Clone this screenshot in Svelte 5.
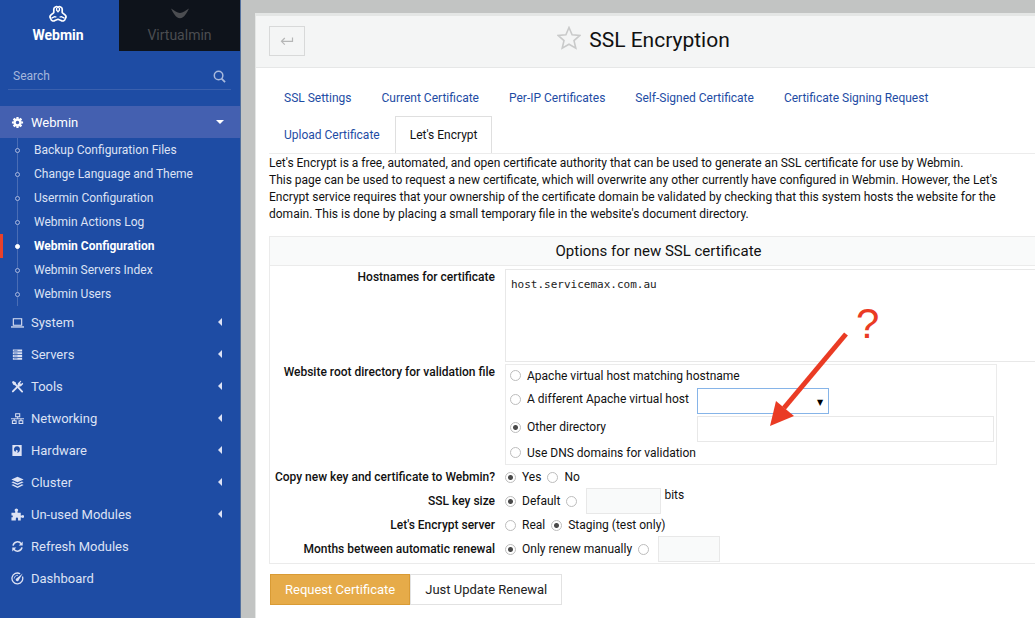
<script lang="ts">
    let search = $state("");
    let rootDir = $state("other");
    let copyKey = $state("yes");
    let keySize = $state("default");
    let server = $state("staging");
    let renewal = $state("manual");

    const subItems = [
        "Backup Configuration Files",
        "Change Language and Theme",
        "Usermin Configuration",
        "Webmin Actions Log",
        "Webmin Configuration",
        "Webmin Servers Index",
        "Webmin Users",
    ];

    const categories = [
        { icon: "system", name: "System", sub: true },
        { icon: "servers", name: "Servers", sub: true },
        { icon: "tools", name: "Tools", sub: true },
        { icon: "network", name: "Networking", sub: true },
        { icon: "hardware", name: "Hardware", sub: true },
        { icon: "cluster", name: "Cluster", sub: true },
        { icon: "puzzle", name: "Un-used Modules", sub: true },
        { icon: "refresh", name: "Refresh Modules", sub: false },
        { icon: "dashboard", name: "Dashboard", sub: false },
    ];

    const tabs = [
        "SSL Settings",
        "Current Certificate",
        "Per-IP Certificates",
        "Self-Signed Certificate",
        "Certificate Signing Request",
        "Upload Certificate",
        "Let's Encrypt",
    ];
</script>

{#snippet icon(name)}
    <svg class="icon" viewBox="0 0 14 14" aria-hidden="true">
        {#if name === "cog"}
            <circle cx="7" cy="7" r="3.2" fill="none" stroke="currentColor" stroke-width="2.6" />
            <path d="M7 1v2M7 11v2M1 7h2M11 7h2M2.8 2.8l1.4 1.4M9.8 9.8l1.4 1.4M2.8 11.2l1.4-1.4M9.8 4.2l1.4-1.4" stroke="currentColor" stroke-width="2.4" />
        {:else if name === "system"}
            <path d="M2.500 10V3h9v7z" fill="none" stroke="currentColor" stroke-width="1.200" />
            <path d="M0 11.800h14" stroke="currentColor" stroke-width="1.400" />
        {:else if name === "servers"}
            <path d="M2 1.5h10v2.2H2zM2 4.5h10v2.2H2zM2 7.5h10v2.2H2zM2 10.5h10v2.2H2z" fill="currentColor" />
            <path d="M3 2.6h4M3 5.6h4M3 8.6h4M3 11.6h4" stroke="#1e4ca4" stroke-width=".6" />
        {:else if name === "tools"}
            <path d="M4 4l8 8.5" stroke="currentColor" stroke-width="2" stroke-linecap="round" />
            <path d="M2 12.3l6-6" stroke="currentColor" stroke-width="2" stroke-linecap="round" />
            <path d="M8 7.2L7 6l.4-2.6L10.2.9l1 .3-1.4 2 .9 1 2-1.2.4 1.2-2.3 2.5zM1 2.2L2.4 1l2.9 1.8.2 1.9-1.3 1-1.7-.5z" fill="currentColor" />
        {:else if name === "network"}
            <path d="M5 2h4.4v3H5zM1.5 9.5h4v3h-4zM8.7 9.5h4v3h-4z" fill="none" stroke="currentColor" stroke-width="1.1" />
            <path d="M0 7.3h14M7.2 5v2.3M3.5 7.3v2.2M10.7 7.3v2.2" stroke="currentColor" stroke-width="1" />
        {:else if name === "hardware"}
            <path fill-rule="evenodd" d="M1.5 1h10v12h-10zM6.5 2.4a3.3 3.3 0 0 0-1.8 6.1l1-2.2 1.6 1.1-1.5 1.8a3.3 3.3 0 1 0 .7-6.8z" fill="currentColor" />
            <path d="M5 11l2-3.6" stroke="currentColor" stroke-width="1" />
        {:else if name === "cluster"}
            <path d="M7 .8l6.6 3L7 6.8.4 3.8zM.4 6.6l1.9-.8L7 8l4.7-2.2 1.9.8L7 9.7zM.4 9.8l1.9-.8L7 11.2 11.7 9l1.9.8L7 13z" fill="currentColor" />
        {:else if name === "puzzle"}
            <path d="M.5 5h4V3.6a1.8 1.8 0 1 1 2.6 0V5h3.4v3h1.2a1.5 1.5 0 1 1 0 2.2h-1.2v3.2H7.6v-2a1.2 1.2 0 0 0-2.4 0v2H.5V10h1.4V8H.5z" fill="currentColor" />
        {:else if name === "refresh"}
            <path d="M2.2 6A4.8 4.8 0 0 1 11 4.2M11.8 8A4.8 4.8 0 0 1 3 9.8" fill="none" stroke="currentColor" stroke-width="1.7" />
            <path d="M12.6 1.6v4.3H8.3zM1.4 12.4V8.1h4.3z" fill="currentColor" />
        {:else if name === "dashboard"}
            <path d="M12.3 4.9A5.8 5.8 0 1 1 9.8 1.9" fill="none" stroke="currentColor" stroke-width="1.4" />
            <path d="M12.6 1.6L8.4 8.6a1.7 1.7 0 1 1-2.2-2z" fill="currentColor" />
            <path d="M3.5 7A3.5 3.5 0 0 1 7.5 3.6" fill="none" stroke="currentColor" stroke-width=".9" />
        {/if}
    </svg>
{/snippet}

<div class="page">
    <aside class="sidebar">
        <div class="switcher">
            <a class="product current" href="#webmin">
                <svg class="logo" viewBox="0 0 18 18" aria-hidden="true">
                    <path d="M4.8 7.600V4a2.600 2.600 0 0 1 4.200-1.700A2.600 2.600 0 0 1 13.200 4v3.600l2.800 2.200a2.700 2.700 0 0 1 .3 3.700 2.700 2.700 0 0 1-4.200 2L9 14.300l-3.100 1.200a2.700 2.700 0 0 1-4.200-2 2.700 2.700 0 0 1 .3-3.700z" fill="none" stroke="currentColor" stroke-width="1.700" stroke-linejoin="round" />
                    <path d="M7.600 3v2.300L9 6.800l1.400-1.500V3M2.600 13.200l3-1.500 1.800.5M15.400 13.200l-3-1.500-1.800.5" fill="none" stroke="currentColor" stroke-width="1.300" />
                </svg>
                <span>Webmin</span>
            </a>
            <a class="product" href="#virtualmin">
                <svg class="logo" viewBox="0 0 20 18" aria-hidden="true">
                    <path d="M1 3.500c3.500 1.800 6 4.500 9 4.500s5.500-2.700 9-4.500c-2 4-4.800 9.700-9 9.700S3 7.500 1 3.500z" fill="currentColor" />
                </svg>
                <span>Virtualmin</span>
            </a>
        </div>

        <div class="search">
            <input type="text" aria-label="Search" placeholder="Search" bind:value={search}>
            <svg viewBox="0 0 14 14" aria-hidden="true">
                <circle cx="6" cy="6" r="4.6" fill="none" stroke="currentColor" stroke-width="1.6" />
                <path d="M9.2 9.2l3.8 3.8" stroke="currentColor" stroke-width="1.9" />
            </svg>
        </div>

        <nav>
            <a class="category open" href="#webmin-category">
                {@render icon("cog")}
                <span>Webmin</span>
                <i class="caret down"></i>
            </a>
            <ul class="sub">
                {#each subItems as item}
                    <li class:active={item === "Webmin Configuration"}>
                        <a href="#module">{item}</a>
                    </li>
                {/each}
            </ul>
            {#each categories as category}
                <a class="category" href="#category">
                    {@render icon(category.icon)}
                    <span>{category.name}</span>
                    {#if category.sub}
                        <i class="caret"></i>
                    {/if}
                </a>
            {/each}
        </nav>
    </aside>

    <main>
        <div class="panel">
            <header>
                <button class="back" type="button" aria-label="Back">
                    <svg viewBox="0 0 14 10" aria-hidden="true">
                        <path d="M12.5 1.5v3.8H1.5M4.8 2L1.5 5.3l3.3 3.3" fill="none" stroke="currentColor" stroke-width="1.2" />
                    </svg>
                </button>
                <h1>
                    <svg viewBox="0 0 24 24" aria-hidden="true">
                        <path d="M12 1.5l3.1 7.2 7.8.7-5.9 5.2 1.8 7.6-6.800-4-6.800 4 1.8-7.600-5.900-5.200 7.800-.7z" fill="none" stroke="currentColor" stroke-width="1.6" />
                    </svg>
                    SSL Encryption
                </h1>
            </header>

            <div class="body">
                <div class="tabs">
                    {#each tabs as tab}
                        <a class:selected={tab === "Let's Encrypt"} href="#tab">{tab}</a>
                    {/each}
                </div>

                <p>
                    Let's Encrypt is a free, automated, and open certificate authority that can be used to generate an SSL certificate for use by Webmin.<br>
                    This page can be used to request a new certificate, which will overwrite any other currently have configured in Webmin. However, the Let's Encrypt service requires that your ownership of the certificate domain be validated by checking that this system hosts the website for the domain. This is done by placing a small temporary file in the website's document directory.
                </p>

                <form>
                    <section class="options">
                        <h2>Options for new SSL certificate</h2>

                        <div class="row tall">
                            <label class="name" for="hostnames">Hostnames for certificate</label>
                            <textarea id="hostnames" spellcheck="false">host.servicemax.com.au</textarea>
                        </div>

                        <div class="row tall">
                            <span class="name" id="root-name">Website root directory for validation file</span>
                            <div class="choices" role="radiogroup" aria-labelledby="root-name">
                                <div class="choice">
                                    <label><input type="radio" value="match" bind:group={rootDir}>Apache virtual host matching hostname</label>
                                </div>
                                <div class="choice field">
                                    <label><input type="radio" value="vhost" bind:group={rootDir}>A different Apache virtual host</label>
                                    <select aria-label="Apache virtual host">
                                        <option></option>
                                    </select>
                                </div>
                                <div class="choice field">
                                    <label><input type="radio" value="other" bind:group={rootDir}>Other directory</label>
                                    <input type="text" class="dir" aria-label="Other directory path">
                                </div>
                                <div class="choice">
                                    <label><input type="radio" value="dns" bind:group={rootDir}>Use DNS domains for validation</label>
                                </div>
                            </div>

                            <div class="note">
                                <svg viewBox="0 0 82 96" aria-hidden="true">
                                    <path d="M76 2L14 76" stroke="#ea3b24" stroke-width="5" />
                                    <path d="M0 94l6-25 18 15z" fill="#ea3b24" />
                                </svg>
                                <span>?</span>
                            </div>
                        </div>

                        <div class="row">
                            <span class="name">Copy new key and certificate to Webmin?</span>
                            <div class="inline">
                                <label><input type="radio" value="yes" bind:group={copyKey}>Yes</label>
                                <label><input type="radio" value="no" bind:group={copyKey}>No</label>
                            </div>
                        </div>
                        <div class="row">
                            <span class="name">SSL key size</span>
                            <div class="inline">
                                <label><input type="radio" value="default" bind:group={keySize}>Default</label>
                                <input type="radio" value="custom" aria-label="Custom key size" bind:group={keySize}>
                                <div class="size">
                                    <input type="text" class="bits" id="bits" disabled>
                                    <label for="bits">bits</label>
                                </div>
                            </div>
                        </div>
                        <div class="row">
                            <span class="name">Let's Encrypt server</span>
                            <div class="inline">
                                <label><input type="radio" value="real" bind:group={server}>Real</label>
                                <label><input type="radio" value="staging" bind:group={server}>Staging (test only)</label>
                            </div>
                        </div>
                        <div class="row">
                            <span class="name">Months between automatic renewal</span>
                            <div class="inline">
                                <label><input type="radio" value="manual" bind:group={renewal}>Only renew manually</label>
                                <input type="radio" value="months" aria-label="Renew after months" bind:group={renewal}>
                                <input type="text" class="months" aria-label="Months" disabled>
                            </div>
                        </div>
                    </section>

                    <div class="buttons">
                        <button class="primary" type="button">Request Certificate</button>
                        <button type="button">Just Update Renewal</button>
                    </div>
                </form>
            </div>
        </div>
    </main>
</div>

<style>
    :global(body){
        background-color: #c2c4c3;
        font-family: Roboto, "Liberation Sans", sans-serif;
        font-size: 12px;
        color: #111;
    }

    *, *::before{
        box-sizing: border-box;
    }

    a{
        text-decoration: none;
    }

    input, textarea, select, button{
        margin: 0;
        font-family: inherit;
        font-size: inherit;
        border-radius: 0;
        outline: none;
    }

    .page{
        display: grid;
        grid-template-columns: 241px 1fr;
        height: 100vh;
        overflow: hidden;
    }

    .sidebar{
        background-color: #1e4ca4;
        border-right: 1px solid #54719f;
        color: #dde2f4;
    }

    .switcher{
        display: grid;
        grid-template-columns: 119px 1fr;
        height: 51px;
    }

    .product{
        display: flex;
        flex-direction: column;
        align-items: center;
        padding-top: 5px;
        background-color: #0e131b;
        color: #4b4d51;
        font-size: 14px;
        line-height: 25px;
    }

    .product.current{
        padding-right: 3px;
        background-color: transparent;
        color: #fff;
        font-weight: 700;
    }

    .logo{
        flex: none;
        width: 20px;
        height: 18px;
    }

    .search{
        display: flex;
        align-items: center;
        height: 27px;
        margin: 12px 9px 16px 8px;
        padding: 0 5px;
        border-bottom: 1px solid #3a60ae;
    }

    .search input{
        flex: 1;
        min-width: 0;
        padding: 0;
        border: none;
        background: none;
        color: #fff;
    }

    .search input::placeholder{
        color: #a5b7dc;
        opacity: 1;
    }

    .search svg{
        width: 13px;
        height: 13px;
        color: #a9badd;
    }

    .category{
        display: flex;
        align-items: center;
        gap: 7px;
        height: 32px;
        padding: 0 18px 0 11px;
        color: #dde2f4;
        font-size: 13px;
    }

    .category span{
        flex: 1;
    }

    .category.open{
        padding-right: 16px;
        background-color: #4460b0;
        color: #fff;
    }

    .icon{
        width: 13px;
        height: 13px;
    }

    .caret{
        border: 4px solid transparent;
        border-right-color: currentColor;
        border-left-width: 0;
    }

    .caret.down{
        border: 4px solid transparent;
        border-top-color: currentColor;
        border-bottom-width: 0;
    }

    .sub{
        margin: 0;
        padding: 0;
        list-style: none;
        background: linear-gradient(#4a6db5, #4a6db5) 17px 0 / 1px 100% no-repeat;
    }

    .sub li{
        display: flex;
        align-items: center;
        gap: 14px;
        height: 24px;
        padding-left: 12px;
        border-left: 3px solid transparent;
    }

    .sub li::before{
        content: "";
        width: 5px;
        height: 5px;
        border: 1px solid #a9b7dd;
        border-radius: 50%;
        background-color: #1e4ca4;
    }

    .sub a{
        color: #dde2f4;
    }

    .sub .active{
        border-left-color: #e8412b;
    }

    .sub .active::before{
        border-color: #fff;
        background-color: #fff;
    }

    .sub .active a{
        color: #fff;
        font-weight: 700;
    }

    main{
        min-width: 0;
        padding: 13px 0 0 14px;
    }

    .panel{
        height: 100%;
        margin-right: -1px;
        border: 1px solid #e4e6e5;
        border-top-width: 3px;
        border-bottom: none;
        background-color: #fff;
    }

    header{
        position: relative;
        display: flex;
        align-items: center;
        justify-content: center;
        height: 52px;
        padding: 0 4px 4px 0;
        border-bottom: 1px solid #e6e7e7;
        background-color: #f4f5f5;
    }

    .back{
        position: absolute;
        left: 13px;
        top: 10px;
        display: flex;
        align-items: center;
        justify-content: center;
        width: 36px;
        height: 30px;
        border: 1px solid #d8d9d9;
        background: none;
        color: #b5b6b6;
    }

    .back svg{
        flex: none;
        width: 14px;
    }

    h1{
        display: flex;
        align-items: center;
        gap: 8px;
        margin: 0;
        font-size: 21px;
        font-weight: 400;
    }

    h1 svg{
        width: 24px;
        height: 24px;
        margin-bottom: 3px;
        color: #c9caca;
    }

    .body{
        padding: 11px 0 0 13px;
    }

    .tabs{
        display: flex;
        flex-wrap: wrap;
        margin-bottom: 1px;
        border-bottom: 1px solid #ececec;
    }

    .tabs a{
        height: 37px;
        padding: 0 14px;
        border: 1px solid transparent;
        border-bottom: none;
        color: #1e4ca4;
        line-height: 36px;
    }

    .tabs .selected{
        margin-bottom: -1px;
        border-color: #dfdfdf;
        background-color: #fff;
        color: #111;
    }

    p{
        margin: 0;
        line-height: 17px;
    }

    .options{
        margin: 13px -13px 0 0;
        padding-bottom: 2px;
        border: 1px solid #ebebeb;
    }

    h2{
        margin: 0 0 1px;
        border-bottom: 1px solid #ebebeb;
        background-color: #f9fafa;
        font-size: 15px;
        font-weight: 400;
        line-height: 28px;
        text-align: center;
    }

    .row{
        position: relative;
        display: grid;
        grid-template-columns: 225px 1fr;
        grid-template-rows: 24px;
        gap: 10px;
        align-items: center;
    }

    .row.tall{
        grid-template-rows: auto;
        align-items: start;
        padding-top: 2px;
    }

    textarea{
        display: block;
        width: 100%;
        height: 93px;
        padding: 8px 5px;
        border: 1px solid #e8e8e8;
        color: #222;
        font-family: "DejaVu Sans Mono", monospace;
        font-size: 11px;
        resize: none;
    }

    .choices{
        margin-right: 50px;
        padding: 0 2px 1px 4px;
        border: 1px solid #ebebeb;
    }

    .choice{
        display: flex;
        align-items: center;
        height: 21px;
    }

    .choice.field{
        position: relative;
        display: grid;
        grid-template-columns: 187px 1fr;
        align-items: end;
        height: 28px;
    }

    .choice.field label{
        align-self: start;
        height: 26px;
    }

    label{
        display: flex;
        align-items: center;
        gap: 6px;
        white-space: nowrap;
    }

    .name{
        display: block;
        font-weight: 500;
        line-height: 16px;
        text-align: right;
    }

    input[type="radio"]{
        appearance: none;
        flex: none;
        width: 11px;
        height: 11px;
        border: 1px solid #bdbdbd;
        border-radius: 50%;
        background-color: #fff;
    }

    input[type="radio"]:checked{
        background: radial-gradient(circle, #4a4a4a 2px, #fff 3px);
    }

    input[type="text"], select{
        height: 26px;
    }

    .search input[type="text"]{
        height: 20px;
    }

    select{
        appearance: none;
        width: 132px;
        border: 1px solid #86b4e8;
        background-color: #fff;
    }

    .field:has(select)::after{
        content: "▼";
        position: absolute;
        left: 307px;
        bottom: 7px;
        font-family: "DejaVu Sans", sans-serif;
        font-size: 8px;
        color: #000;
        pointer-events: none;
    }

    .dir, .bits, .months{
        border: 1px solid #e8e8e8;
        background-color: #fff;
    }

    .inline{
        display: flex;
        align-items: center;
        gap: 6px;
    }

    .size{
        display: flex;
        align-items: flex-start;
        gap: 3px;
    }

    .bits{
        width: 75px;
        margin-left: 3px;
        background-color: #f9fafa;
    }

    .months{
        width: 62px;
        margin-left: 3px;
        background-color: #f9fafa;
    }

    .note{
        position: absolute;
        left: 500px;
        top: -30px;
        width: 82px;
        color: #ea3b24;
        pointer-events: none;
    }

    .note svg{
        display: block;
        width: 82px;
    }

    .note span{
        position: absolute;
        left: 86px;
        top: -32px;
        font-family: "Liberation Sans", sans-serif;
        font-size: 42px;
        line-height: 48px;
    }

    .buttons{
        display: flex;
        margin: 10px 0 0 1px;
    }

    .buttons button{
        height: 31px;
        padding: 0 14px;
        border: 1px solid #e2e2e2;
        background-color: #fff;
        color: #222;
        font-size: 13px;
    }

    .buttons .primary{
        border-color: #d99b35;
        background-color: #e6ab49;
        color: #fff;
    }
</style>
